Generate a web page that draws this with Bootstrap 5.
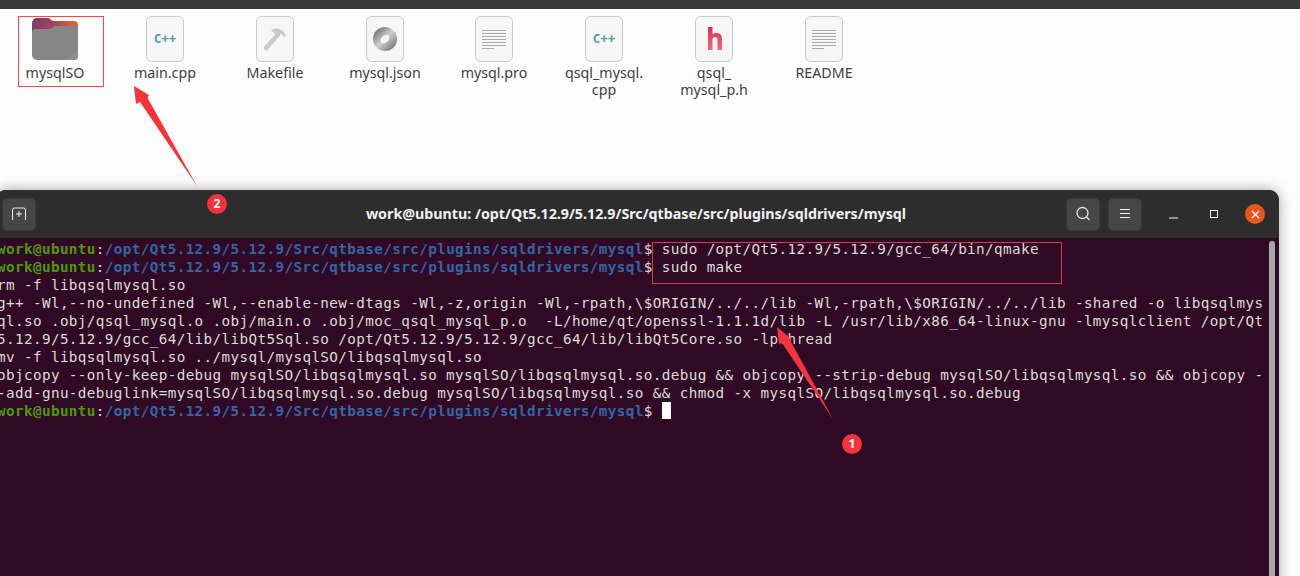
<!DOCTYPE html>
<html lang="en">
<head>
<meta charset="utf-8">
<title>mysql plugin build</title>
<link href="https://cdn.jsdelivr.net/npm/bootstrap@5.3.0/dist/css/bootstrap.min.css" rel="stylesheet">
<style>
html,body{height:576px;overflow:hidden;background:#fdfdfd}
.stage{position:relative;width:1300px;height:576px;overflow:hidden}
.fm-top{height:9px;background:#3a3a3a}
.file-row{height:181px;padding-top:7px}
.file-cell{width:110px;font:14.25px/17px "Noto Sans","Open Sans",sans-serif;color:#3d3d3d;text-align:center}
.cell-shift{margin-left:-1px;margin-right:1px}
.file-icon{height:46px;margin-bottom:2px}
.term{width:1283px;height:400px;margin-left:-4px;background:#300a24;border-radius:10px 10px 0 0;box-shadow:0 0 14px rgba(0,0,0,.35);overflow:hidden}
.term-head{height:48px;background:#2d2d2d;color:#fff;position:relative;padding:0 0 0 6px}
.hbtn{width:34px;height:33px;background:#464646;border-radius:5px;border:1px solid #3a3a3a}
.term-title{position:absolute;left:0;right:3px;top:15px;text-align:center;font:700 14.25px/18px "Noto Sans","Open Sans",sans-serif;color:#f2f2f2}
.win-close{width:20px;height:20px;border-radius:50%;background:#e95420;margin-left:26px;margin-right:14px}
.win-min{margin-left:27px}
.win-max{margin-left:32px}
.btn-gap{margin-left:8px}
.term-body{font:14.3px/18px "DejaVu Sans Mono",monospace;letter-spacing:.375px;color:#dcdcd6;white-space:pre;padding:2px 0 0 1px;margin:0;overflow:visible;position:relative}
.pr-user{color:#4e9a06;font-weight:700}
.pr-path{color:#3465a4;font-weight:700}
.pr-sep{color:#dcdcd6}
.cursor{display:inline-block;width:9px;height:17px;background:#fff;vertical-align:-3px}
.sbar{position:absolute;right:4px;top:51px;bottom:0;width:6px;background:#a9a5a8;border-radius:3px 3px 0 0}
.overlay{position:absolute;left:0;top:0;pointer-events:none}
.mark-box{position:absolute;border:1px solid #f44}
.box-a{left:18px;top:16px;width:86px;height:71px}
.box-b{left:652px;top:242px;width:410px;height:42px;border-color:#d23c55}
.num-badge{position:absolute;width:20px;height:20px;border-radius:50%;background:#f5333a;color:#fff;font:700 12px/20px "Noto Sans",sans-serif;text-align:center}
.nb-a{left:207px;top:194px}
.nb-b{left:842px;top:434px}
</style>
</head>
<body>
<div class="stage">
  <div class="fm-top"></div>
  <div class="file-row d-flex align-items-start">
    <div class="file-cell">
      <svg class="file-icon d-block mx-auto" width="46" height="46" viewBox="0 0 46 46"><defs><linearGradient id="fb" x1="0" x2="1" y1="0" y2="0"><stop offset="0" stop-color="#7f3b6b"/><stop offset=".5" stop-color="#a5455a"/><stop offset="1" stop-color="#df6a32"/></linearGradient></defs><path d="M0 7a5 5 0 0 1 5-5h11a4 4 0 0 1 3 1.500l1.500 1.500H42a4 4 0 0 1 4 4v10H0z" fill="url(#fb)"/><path d="M0 16a3 3 0 0 1 3-3h14a4 4 0 0 0 3-1l2-2h21a3 3 0 0 1 3 3v27a4 4 0 0 1-4 4H5a5 5 0 0 1-5-5z" fill="#868686"/><path d="M46 34v6a4 4 0 0 1-4 4h-8z" fill="#8f8f8f"/></svg>
      <div>mysqlSO</div>
    </div>
    <div class="file-cell">
      <svg class="file-icon d-block mx-auto" width="38" height="46" viewBox="0 0 38 46"><rect x=".5" y=".5" width="37" height="45" rx="5" fill="#f6f6f6" stroke="#c8c8c8"/><text x="19" y="27" text-anchor="middle" font-family="DejaVu Sans Mono,monospace" font-weight="700" font-size="12.500" fill="#4fa0a6">C++</text></svg>
      <div>main.cpp</div>
    </div>
    <div class="file-cell">
      <svg class="file-icon d-block mx-auto" width="38" height="46" viewBox="0 0 38 46"><rect x=".5" y=".5" width="37" height="45" rx="5" fill="#f6f6f6" stroke="#c8c8c8"/><path d="M10 32l12-13.500" stroke="#c9c9c9" stroke-width="4.500" stroke-linecap="round"/><path d="M15 14c5-3 11-2 15 5l-1.500 2-4-3.500-3 2.500-3.500-3z" fill="#c9c9c9"/></svg>
      <div>Makefile</div>
    </div>
    <div class="file-cell">
      <svg class="file-icon d-block mx-auto" width="38" height="46" viewBox="0 0 38 46"><defs><linearGradient id="jg" x1="0" x2="1" y1="0" y2="1"><stop offset="0" stop-color="#555"/><stop offset=".5" stop-color="#cfcfcf"/><stop offset="1" stop-color="#5c5c5c"/></linearGradient></defs><rect x=".5" y=".5" width="37" height="45" rx="5" fill="#f6f6f6" stroke="#c8c8c8"/><circle cx="19" cy="23" r="12" fill="url(#jg)"/><ellipse cx="19" cy="23" rx="5" ry="3.500" transform="rotate(-40 19 23)" fill="#f6f6f6"/></svg>
      <div>mysql.json</div>
    </div>
    <div class="file-cell cell-shift">
      <svg class="file-icon d-block mx-auto" width="38" height="46" viewBox="0 0 38 46"><rect x=".5" y=".5" width="37" height="45" rx="5" fill="#f6f6f6" stroke="#c8c8c8"/><path d="M7 14.500h24M7 17.500h24M7 20.500h24M7 23.500h24M7 26.500h24M7 29.500h24M7 32.500h12" stroke="#a8a8a8"/></svg>
      <div>mysql.pro</div>
    </div>
    <div class="file-cell cell-shift">
      <svg class="file-icon d-block mx-auto" width="38" height="46" viewBox="0 0 38 46"><rect x=".5" y=".5" width="37" height="45" rx="5" fill="#f6f6f6" stroke="#c8c8c8"/><text x="19" y="27" text-anchor="middle" font-family="DejaVu Sans Mono,monospace" font-weight="700" font-size="12.500" fill="#4fa0a6">C++</text></svg>
      <div>qsql_mysql.<br>cpp</div>
    </div>
    <div class="file-cell cell-shift">
      <svg class="file-icon d-block mx-auto" width="38" height="46" viewBox="0 0 38 46"><defs><linearGradient id="hg" x1="0" x2="0" y1="0" y2="1"><stop offset="0" stop-color="#dc2e50"/><stop offset="1" stop-color="#ee6a80"/></linearGradient></defs><rect x=".5" y=".5" width="37" height="45" rx="5" fill="#f6f6f6" stroke="#c8c8c8"/><path d="M13 11h4.500v7.500c1-1 2.500-1.500 4-1.500 3.500 0 5.500 2 5.500 6v11h-4.500V24c0-2-1-3-2.500-3s-2.500 1-2.500 3v10H13z" fill="url(#hg)"/></svg>
      <div>qsql_<br>mysql_p.h</div>
    </div>
    <div class="file-cell cell-shift">
      <svg class="file-icon d-block mx-auto" width="38" height="46" viewBox="0 0 38 46"><rect x=".5" y=".5" width="37" height="45" rx="5" fill="#f6f6f6" stroke="#c8c8c8"/><path d="M7 14.500h24M7 17.500h24M7 20.500h24M7 23.500h24M7 26.500h24M7 29.500h24M7 32.500h12" stroke="#a8a8a8"/></svg>
      <div>README</div>
    </div>
  </div>

  <div class="term position-relative">
    <div class="term-head d-flex align-items-center">
      <div class="hbtn d-flex align-items-center justify-content-center">
        <svg width="16" height="16" viewBox="0 0 16 16" fill="none" stroke="#f0f0f0"><path d="M1.500 14V4a2 2 0 0 1 2-2h9a2 2 0 0 1 2 2v10M5 8h6M8 5v6"/></svg>
      </div>
      <div class="term-title">work@ubuntu: /opt/Qt5.12.9/5.12.9/Src/qtbase/src/plugins/sqldrivers/mysql</div>
      <div class="d-flex align-items-center ms-auto">
        <div class="hbtn d-flex align-items-center justify-content-center">
          <svg width="16" height="16" viewBox="0 0 16 16" fill="none" stroke="#e8e8e8" stroke-width="1.300"><circle cx="7.500" cy="7" r="5.500"/><path d="M11.500 11l3 3"/></svg>
        </div>
        <div class="hbtn btn-gap d-flex align-items-center justify-content-center">
          <svg width="12" height="10" viewBox="0 0 12 10" stroke="#f0f0f0"><path d="M1 .5h10M1 4.500h10M1 8.500h10"/></svg>
        </div>
        <svg class="win-min" width="9" height="9" viewBox="0 0 9 9" stroke="#f0f0f0"><path d="M0 8h9"/></svg>
        <svg class="win-max" width="9" height="9" viewBox="0 0 9 9" fill="none" stroke="#f0f0f0"><rect x=".5" y=".5" width="7" height="7"/></svg>
        <div class="win-close d-flex align-items-center justify-content-center">
          <svg width="9" height="9" viewBox="0 0 9 9" stroke="#fff" stroke-width="1.400"><path d="M1 1l7 7M8 1l-7 7"/></svg>
        </div>
      </div>
    </div>
    <pre class="term-body"><span class="pr-user">work@ubuntu</span><span class="pr-sep">:</span><span class="pr-path">/opt/Qt5.12.9/5.12.9/Src/qtbase/src/plugins/sqldrivers/mysql</span>$ sudo /opt/Qt5.12.9/5.12.9/gcc_64/bin/qmake
<span class="pr-user">work@ubuntu</span><span class="pr-sep">:</span><span class="pr-path">/opt/Qt5.12.9/5.12.9/Src/qtbase/src/plugins/sqldrivers/mysql</span>$ sudo make
rm -f libqsqlmysql.so
g++ -Wl,--no-undefined -Wl,--enable-new-dtags -Wl,-z,origin -Wl,-rpath,\$ORIGIN/../../lib -Wl,-rpath,\$ORIGIN/../../lib -shared -o libqsqlmys
ql.so .obj/qsql_mysql.o .obj/main.o .obj/moc_qsql_mysql_p.o  -L/home/qt/openssl-1.1.1d/lib -L /usr/lib/x86_64-linux-gnu -lmysqlclient /opt/Qt
5.12.9/5.12.9/gcc_64/lib/libQt5Sql.so /opt/Qt5.12.9/5.12.9/gcc_64/lib/libQt5Core.so -lpthread
mv -f libqsqlmysql.so ../mysql/mysqlSO/libqsqlmysql.so
objcopy --only-keep-debug mysqlSO/libqsqlmysql.so mysqlSO/libqsqlmysql.so.debug &amp;&amp; objcopy --strip-debug mysqlSO/libqsqlmysql.so &amp;&amp; objcopy -
-add-gnu-debuglink=mysqlSO/libqsqlmysql.so.debug mysqlSO/libqsqlmysql.so &amp;&amp; chmod -x mysqlSO/libqsqlmysql.so.debug
<span class="pr-user">work@ubuntu</span><span class="pr-sep">:</span><span class="pr-path">/opt/Qt5.12.9/5.12.9/Src/qtbase/src/plugins/sqldrivers/mysql</span>$ <span class="cursor"></span></pre>
    <div class="sbar"></div>
  </div>

  <div class="mark-box box-a"></div>
  <div class="mark-box box-b"></div>
  <svg class="overlay" width="1300" height="576" viewBox="0 0 1300 576">
    <path d="M134 86L149 95 147.600 98 197 186 140 102 136 104z" fill="#f5333a"/>
    <path d="M777 327L792 339.500 790 340 833 419 782 343 779 344z" fill="#f5333a"/>
  </svg>
  <div class="num-badge nb-a">2</div>
  <div class="num-badge nb-b">1</div>
</div>
</body>
</html>
